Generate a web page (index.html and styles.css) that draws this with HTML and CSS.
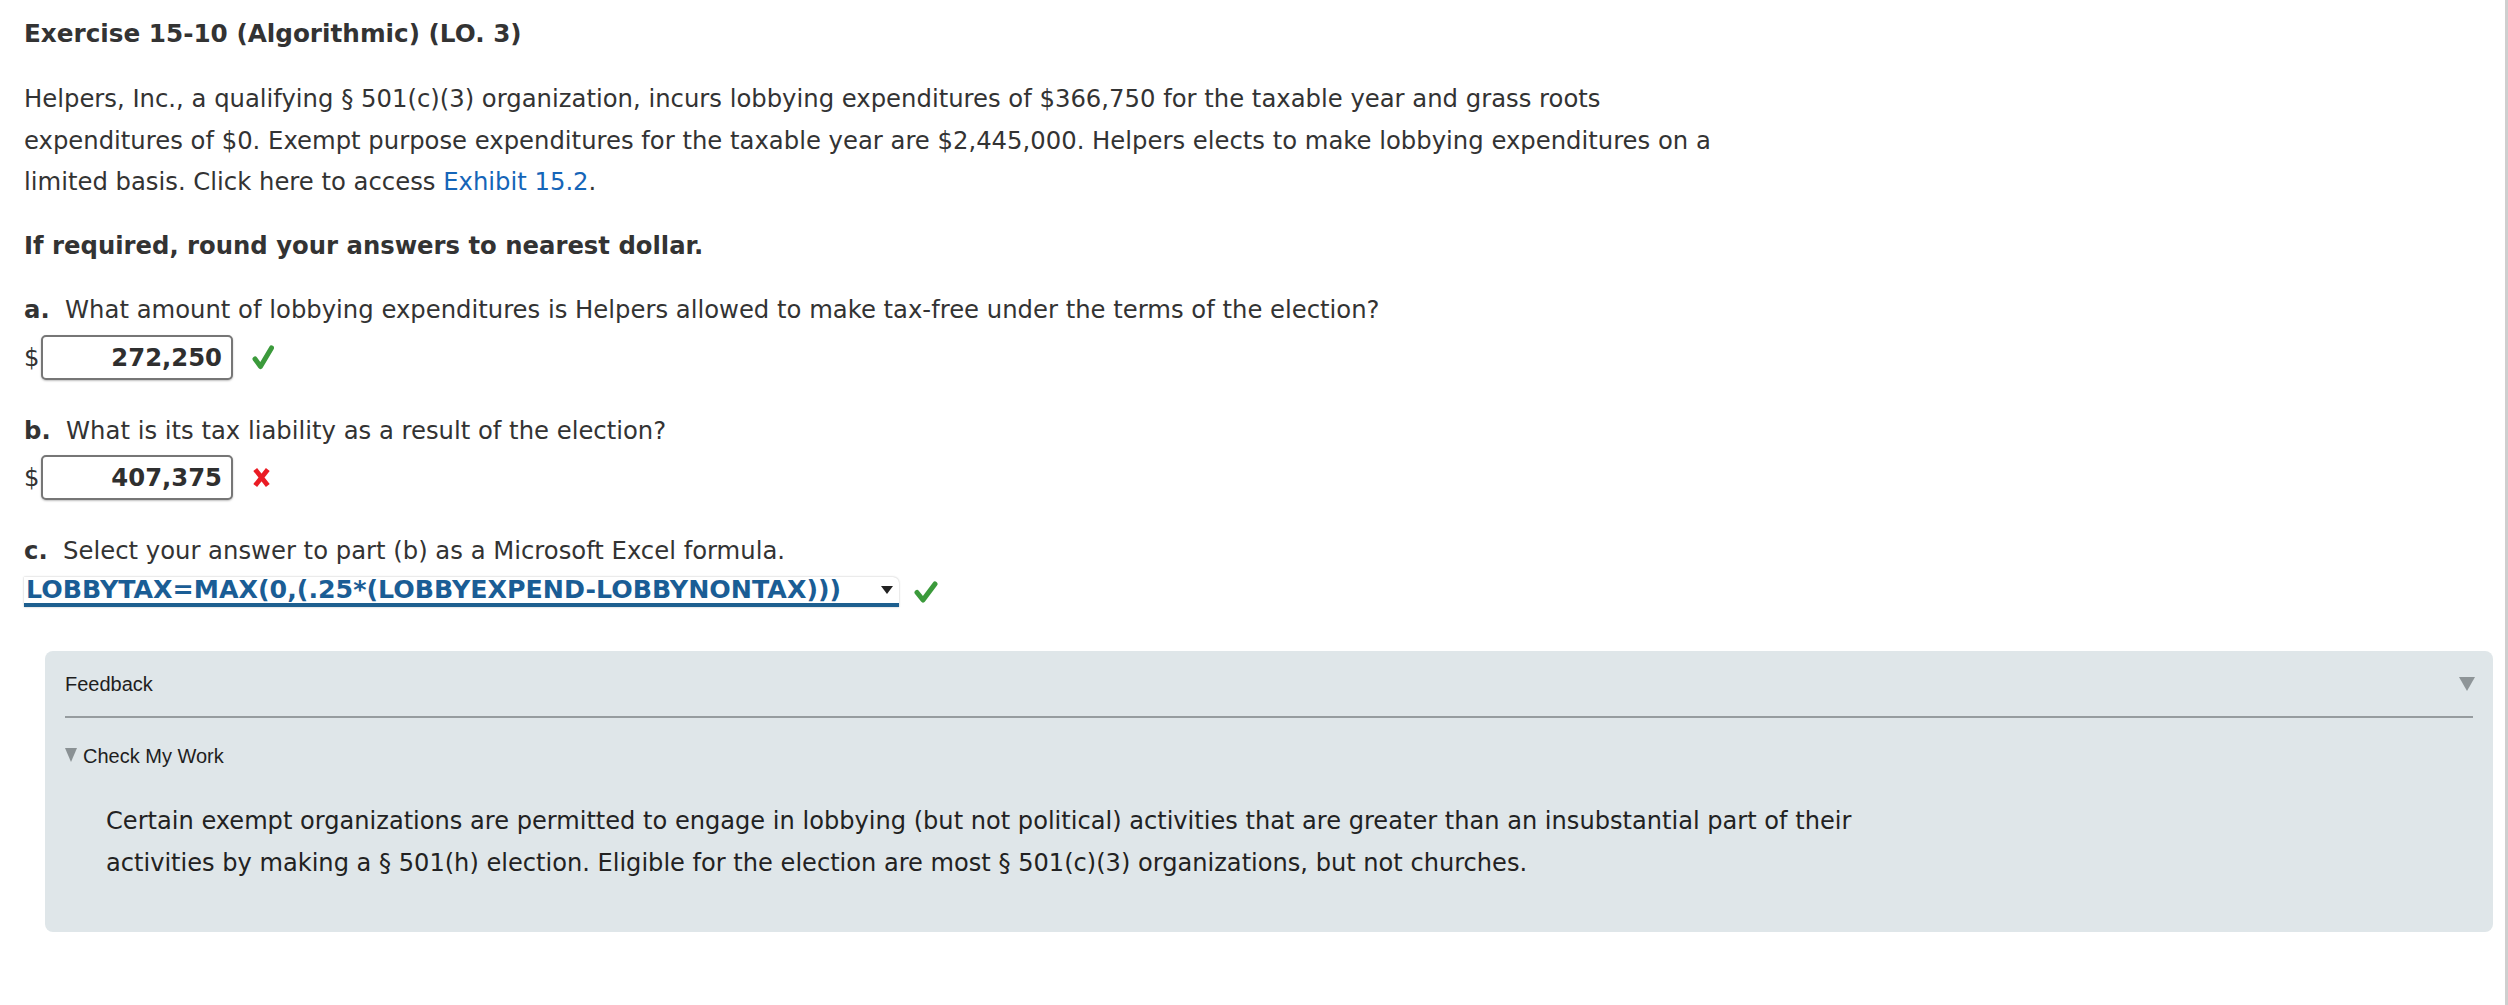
FILE: index.html
```html
<!DOCTYPE html>
<html lang="en">
<head>
<meta charset="utf-8">
<title>Exercise 15-10 (Algorithmic) (LO. 3)</title>
<link rel="stylesheet" href="styles.css">
</head>
<body>
<div class="page">
  <main class="content">
    <h1 class="title">Exercise 15-10 (Algorithmic) (LO. 3)</h1>
    <p class="intro">Helpers, Inc., a qualifying § 501(c)(3) organization, incurs lobbying expenditures of $366,750 for the taxable year and grass roots<br>expenditures of $0. Exempt purpose expenditures for the taxable year are $2,445,000. Helpers elects to make lobbying expenditures on a<br>limited basis. Click here to access <a class="link" href="#">Exhibit 15.2</a>.</p>
    <p class="note">If required, round your answers to nearest dollar.</p>

    <section class="question">
      <p class="q-text"><b class="q-label">a.</b>&nbsp; What amount of lobbying expenditures is Helpers allowed to make tax-free under the terms of the election?</p>
      <div class="answer-row">
        <span class="currency">$</span>
        <span class="input">272,250</span>
        <svg class="mark-ok" width="22" height="25" viewBox="0 0 22 25"><path d="M3 14 L8.5 21.5 L19.5 3" fill="none" stroke="#3b9a3b" stroke-width="5" stroke-linecap="round" stroke-linejoin="round"/></svg>
      </div>
    </section>

    <section class="question">
      <p class="q-text"><b class="q-label">b.</b>&nbsp; What is its tax liability as a result of the election?</p>
      <div class="answer-row">
        <span class="currency">$</span>
        <span class="input">407,375</span>
        <svg class="mark-bad" width="17" height="19" viewBox="0 0 17 19"><path d="M2.2 1.5 L14.8 17.5 M14.8 1.5 L2.2 17.5" fill="none" stroke="#ea1c24" stroke-width="4.8"/></svg>
      </div>
    </section>

    <section class="question question-c">
      <p class="q-text"><b class="q-label">c.</b>&nbsp; Select your answer to part (b) as a Microsoft Excel formula.</p>
      <div class="answer-row select-row">
        <div class="select">
          <span class="select-text">LOBBYTAX=MAX(0,(.25*(LOBBYEXPEND-LOBBYNONTAX)))</span>
          <span class="select-arrow"></span>
        </div>
        <svg class="mark-ok mark-c" width="24" height="22" viewBox="0 0 24 22"><path d="M3 11.5 L9 19 L21 3" fill="none" stroke="#3b9a3b" stroke-width="5" stroke-linecap="round" stroke-linejoin="round"/></svg>
      </div>
    </section>

    <section class="feedback">
      <div class="fb-head">
        <span class="fb-title">Feedback</span>
        <span class="fb-toggle"></span>
      </div>
      <div class="fb-rule"></div>
      <div class="fb-check"><span class="fb-tri"></span>Check My Work</div>
      <p class="fb-text">Certain exempt organizations are permitted to engage in lobbying (but not political) activities that are greater than an insubstantial part of their<br>activities by making a § 501(h) election. Eligible for the election are most § 501(c)(3) organizations, but not churches.</p>
    </section>
  </main>
  <div class="edge"></div>
</div>
</body>
</html>
```

FILE: styles.css
```css
html, body {
  margin: 0;
  padding: 0;
  background: #ffffff;
}

body {
  font-family: "DejaVu Sans", Verdana, sans-serif;
  font-size: 24.3px;
  color: #333333;
}

.page {
  display: flex;
  min-height: 100vh;
}

.content {
  flex: 1;
  padding: 12.6px 12px 0 24px;
}

.edge {
  width: 3px;
  background: #cfcfcf;
}

.title {
  margin: 0 0 24px 0;
  font-size: 24.7px;
  line-height: 41.6px;
  font-weight: bold;
}

.intro {
  margin: 0 0 22.5px 0;
  line-height: 41.6px;
}

.link {
  color: #1565b8;
  text-decoration: none;
}

.note {
  margin: 0 0 22px 0;
  line-height: 41.6px;
  font-weight: bold;
}

.question {
  margin-bottom: 30px;
}

.q-text {
  margin: 0;
  line-height: 41.6px;
}

.q-label {
  font-weight: bold;
}

.answer-row {
  margin-top: 4px;
  display: flex;
  align-items: center;
  height: 45px;
}

.currency {
  width: 17px;
  color: #333;
}

.input {
  box-sizing: border-box;
  width: 192px;
  height: 45px;
  border: 2px solid #767676;
  border-radius: 5px;
  box-shadow: 0 1px 2px rgba(0,0,0,0.25);
  background: #fff;
  font-weight: bold;
  text-align: right;
  padding-right: 9px;
  line-height: 41px;
  color: #2f2f2f;
}

.mark-ok {
  margin-left: 19px;
}

.mark-bad {
  margin-left: 20px;
}

.question-c {
  margin-bottom: 43.6px;
}

.select-row {
  margin-top: 5.5px;
  height: 30px;
}

.select {
  box-sizing: border-box;
  width: 875px;
  height: 30px;
  display: flex;
  align-items: center;
  justify-content: space-between;
  background: #fff;
  border-bottom: 4px solid #1d5f8f;
  border-radius: 0 6px 0 0;
  box-shadow: 0 0 2px rgba(0,0,0,0.3);
  padding: 0 4px 0 2px;
}

.select-text {
  font-weight: bold;
  font-size: 25.3px;
  color: #1a5d95;
  line-height: 26px;
  white-space: nowrap;
}

.select-arrow {
  width: 0;
  height: 0;
  border-left: 6px solid transparent;
  border-right: 6px solid transparent;
  border-top: 8px solid #222;
  margin-right: 2px;
}

.mark-c {
  margin-left: 15px;
}

.feedback {
  margin-left: 21px;
  margin-right: 0;
  background: #dfe6e9;
  border-radius: 8px;
  padding: 21px 20px 47.5px 20px;
}

.fb-head {
  display: flex;
  justify-content: space-between;
  align-items: center;
  height: 24px;
}

.fb-title,
.fb-check {
  font-family: "Liberation Sans", Arial, sans-serif;
  font-size: 20px;
  color: #1e1e1e;
  line-height: 24px;
}

.fb-toggle {
  width: 0;
  height: 0;
  border-left: 8px solid transparent;
  border-right: 8px solid transparent;
  border-top: 14px solid #8e9598;
  margin-right: -2px;
}

.fb-rule {
  margin-top: 20px;
  height: 2px;
  background: #969c9f;
}

.fb-check {
  margin-top: 26px;
  display: flex;
  align-items: center;
}

.fb-tri {
  width: 0;
  height: 0;
  border-left: 6px solid transparent;
  border-right: 6px solid transparent;
  border-top: 14px solid #8a9194;
  margin-right: 6px;
  margin-top: -2px;
}

.fb-text {
  margin: 33px 0 0 41px;
  font-size: 24.1px;
  line-height: 41.6px;
  color: #222;
}
```
